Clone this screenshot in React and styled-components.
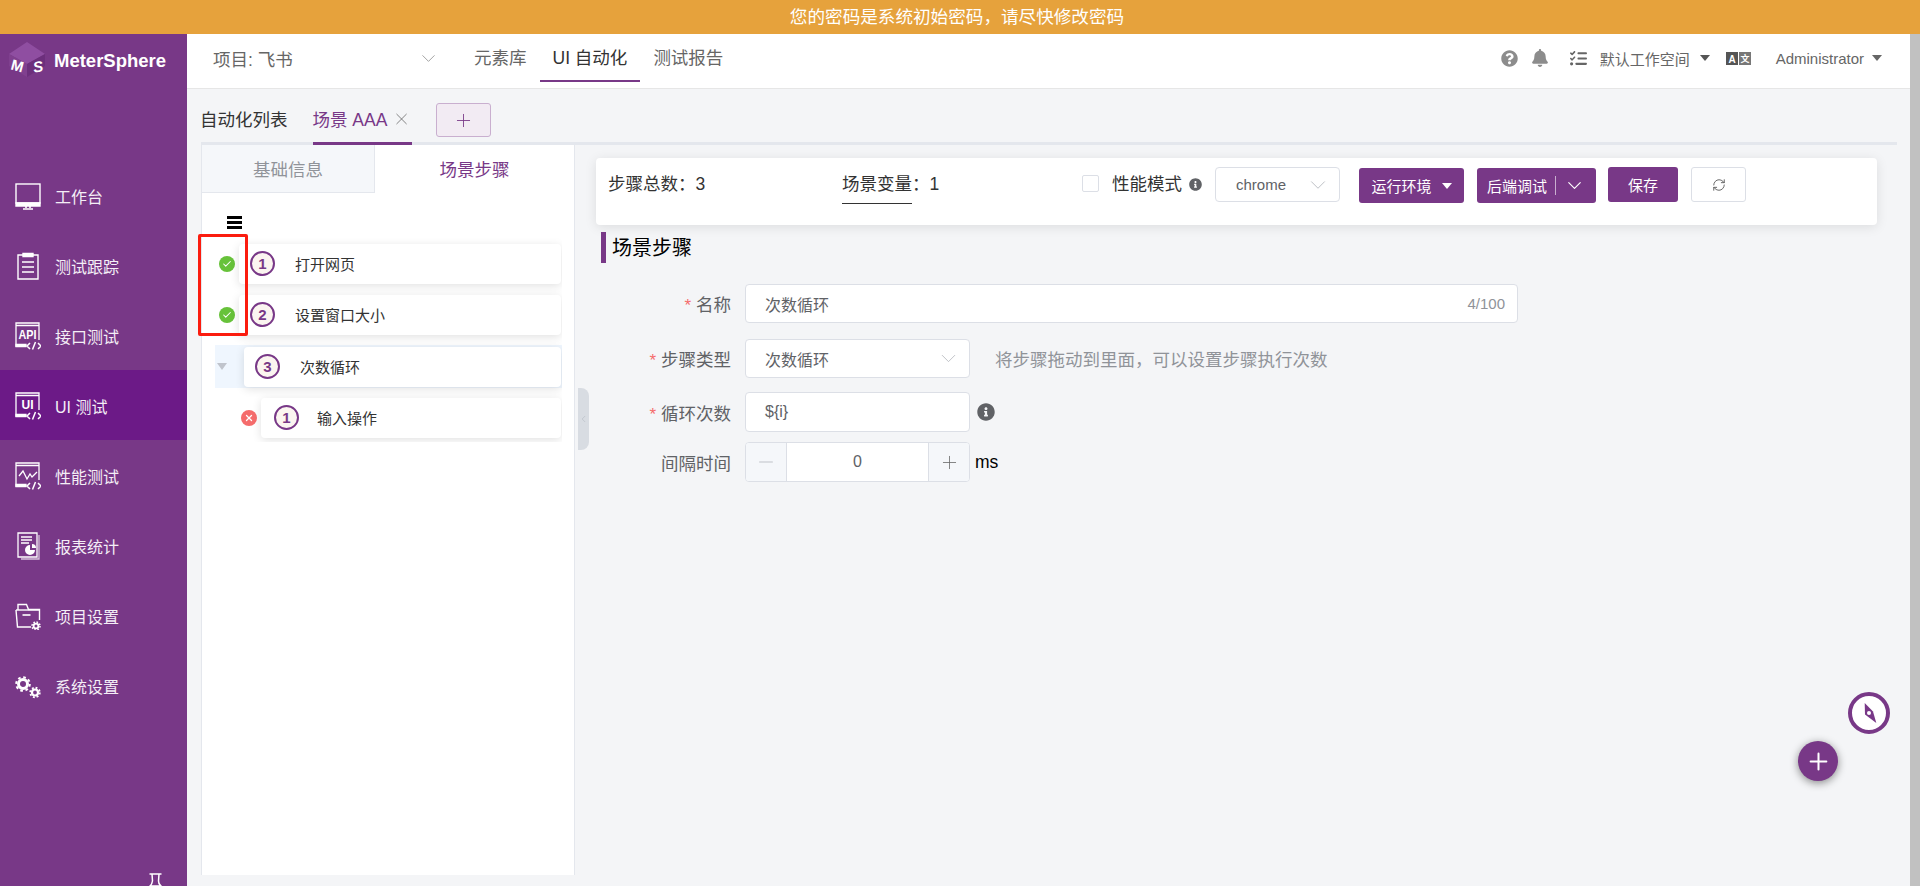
import styled, { createGlobalStyle } from "styled-components"
import { FaBell, FaInfoCircle, FaQuestionCircle } from "react-icons/fa"
import { FaListCheck } from "react-icons/fa6"
import { ChevronDown, ChevronLeft, Minus, Plus, RefreshCw, X, Check } from "lucide-react"

const purple = "#783887"

const Global = createGlobalStyle`
  html, body, #root { margin: 0; height: 100%; }
  body {
    overflow: hidden;
    font-family: "Liberation Sans", "Noto Sans CJK SC", sans-serif;
    color: #333;
  }
  * { box-sizing: border-box; }
`

function MonitorIcon() {
  return (
    <svg width="26" height="28" viewBox="0 0 26 28" fill="none" stroke="#fff" strokeWidth="1.4">
      <rect x="1" y="2" width="24" height="19" />
      <path d="M1 21h24v3H1z" fill="#fff" />
      <path d="M11 24v2M15 24v2M8 27h10" strokeWidth="1.6" />
    </svg>
  )
}

function ClipboardIcon() {
  return (
    <svg width="26" height="28" viewBox="0 0 26 28" fill="none" stroke="#fff" strokeWidth="1.4">
      <path d="M8 3H3v24h20V3h-5" />
      <path d="M8 1.500h10v3H8z" fill="#fff" />
      <path d="M7 10h12M7 15h12M7 20h12" />
    </svg>
  )
}

function TestIcon({ label, wave }) {
  return (
    <svg width="26" height="28" viewBox="0 0 26 28" fill="none" stroke="#fff" strokeWidth="1.3">
      <path d="M11 24H1V1h23v17M1 3.500h23" />
      <path d="M1 22.500h10v2H1z" fill="#fff" />
      {wave && <path d="M4 14l4-5 4 8 3-5 2 3 5-5" />}
      {label && (
        <text
          x="12.500"
          y="17"
          textAnchor="middle"
          fill="#fff"
          stroke="none"
          fontSize={label.length > 2 ? 12 : 13}
          fontWeight="700"
          textLength={label.length > 2 ? 18 : 12}
          lengthAdjust="spacingAndGlyphs"
        >
          {label}
        </text>
      )}
      <path d="M15 21l-3 3 3 3M23 21l3 3-3 3M20.500 20l-3 7.500" strokeWidth="1.5" />
    </svg>
  )
}

function ReportIcon() {
  return (
    <svg width="26" height="28" viewBox="0 0 26 28" fill="none" stroke="#fff" strokeWidth="1.3">
      <path d="M3 1h19v24H3z" />
      <path d="M24 3v24H6" opacity=".7" />
      <path d="M6 5h11M6 8h11M6 11h8" strokeWidth="1.5" />
      <path d="M15 13a5 5 0 1 0 5 5h-5z" fill="#fff" stroke="none" />
      <path d="M17 12a4 4 0 0 1 4 4h-4z" fill="#fff" stroke="none" />
    </svg>
  )
}

function FolderIcon() {
  return (
    <svg width="26" height="28" viewBox="0 0 26 28" fill="none" stroke="#fff" strokeWidth="1.4">
      <path d="M3 8V2.500h8.500l2 5h11V18" />
      <path d="M1 8h23.500" />
      <path d="M1 8l1.500 17H16" />
      <path d="M7.500 13h8" strokeWidth="1.6" />
      <circle cx="21" cy="24" r="2.400" strokeWidth="1.800" />
      <circle cx="21" cy="24" r="4" strokeWidth="1.500" strokeDasharray="1.600 1.540" />
    </svg>
  )
}

function GearsIcon() {
  return (
    <svg width="26" height="28" viewBox="0 0 26 28" fill="none" stroke="#fff">
      <circle cx="8" cy="12" r="4.500" strokeWidth="3" />
      <circle cx="8" cy="12" r="6.800" strokeWidth="2" strokeDasharray="2.700 2.640" />
      <circle cx="20" cy="20.500" r="3" strokeWidth="2.200" />
      <circle cx="20" cy="20.500" r="4.800" strokeWidth="1.800" strokeDasharray="1.900 1.870" />
    </svg>
  )
}

function PinIcon() {
  return (
    <svg width="13" height="24" viewBox="0 0 13 24" fill="none" stroke="#fff" strokeWidth="1.5">
      <path d="M0.500 1h12M3 1l0.500 7Q3 11 1 13h11Q9.500 11 9.500 8L10 1" />
    </svg>
  )
}

function LogoCube() {
  return (
    <svg width="36" height="35" viewBox="0 0 36 35">
      <path d="M18 0l18 12-18 10L0 12z" fill="#8f4ea1" />
      <path d="M0 12l18 10v13L0 24z" fill="#80408f" />
      <path d="M36 12L18 22v13l18-11z" fill="#6c2f7c" />
      <text x="2" y="29" fontSize="15" fontWeight="700" fill="#fff" transform="rotate(15 8 24)">M</text>
      <text x="24" y="30" fontSize="15" fontWeight="700" fontStyle="italic" fill="#fff" transform="rotate(-10 29 25)">S</text>
    </svg>
  )
}

function LangIcon() {
  return (
    <svg width="25" height="13" viewBox="0 0 25 13">
      <rect width="12" height="13" fill="#555" />
      <rect x="13" width="12" height="13" fill="#777" />
      <text x="6" y="10.500" textAnchor="middle" fontSize="10" fontWeight="700" fill="#fff">A</text>
      <text x="19" y="10" textAnchor="middle" fontSize="9" fontWeight="700" fill="#fff">文</text>
    </svg>
  )
}

function CompassIcon() {
  return (
    <svg width="42" height="42" viewBox="0 0 42 42">
      <circle cx="21" cy="21" r="19" fill="#fff" stroke={purple} strokeWidth="4" />
      <path d="M16.700 11L25 19.500 28.300 31 17 22.500z" fill={purple} />
      <circle cx="21" cy="21" r="2" fill="#fff" />
    </svg>
  )
}

const menus = [
  { name: "工作台", icon: <MonitorIcon /> },
  { name: "测试跟踪", icon: <ClipboardIcon /> },
  { name: "接口测试", icon: <TestIcon label="API" /> },
  { name: "UI 测试", icon: <TestIcon label="UI" />, active: true },
  { name: "性能测试", icon: <TestIcon wave /> },
  { name: "报表统计", icon: <ReportIcon /> },
  { name: "项目设置", icon: <FolderIcon /> },
  { name: "系统设置", icon: <GearsIcon /> },
]

const steps = [
  { no: 1, name: "打开网页", status: "ok", indent: 17 },
  { no: 2, name: "设置窗口大小", status: "ok", indent: 17 },
  { no: 3, name: "次数循环", status: "open", indent: 13 },
  { no: 1, name: "输入操作", status: "error", indent: 39 },
]

export default function App() {
  return (
    <Page>
      <Global />
      <Banner>您的密码是系统初始密码，请尽快修改密码</Banner>
      <Body>
        <Sidebar>
          <LogoRow>
            <LogoCube />
            <LogoText>MeterSphere</LogoText>
          </LogoRow>
          {menus.map((m) => (
            <MenuItem key={m.name} $active={m.active}>
              {m.icon}
              <span>{m.name}</span>
            </MenuItem>
          ))}
          <PinRow>
            <PinIcon />
          </PinRow>
        </Sidebar>

        <Content>
          <Header>
            <ProjectSelect>
              <span>项目: 飞书</span>
              <ChevronDown size={23} strokeWidth={0.8} color="#888" />
            </ProjectSelect>
            <NavItem>元素库</NavItem>
            <NavItem $active>UI 自动化</NavItem>
            <NavItem>测试报告</NavItem>
            <HeaderRight>
              <HeaderIcon><FaQuestionCircle size={17} color="#8c8c8c" /></HeaderIcon>
              <HeaderIcon $ml={13}><FaBell size={18} color="#8c8c8c" /></HeaderIcon>
              <HeaderIcon $ml={21}><FaListCheck size={17} color="#666" /></HeaderIcon>
              <HeaderText $ml={13}>默认工作空间</HeaderText>
              <Caret $ml={10} $color="#555" />
              <HeaderIcon $ml={16}><LangIcon /></HeaderIcon>
              <HeaderText $ml={25}>Administrator</HeaderText>
              <Caret $ml={8} $color="#666" />
            </HeaderRight>
          </Header>

          <Workspace>
            <TabBar>
              <TopTab $shift={-1} $mr={25}>自动化列表</TopTab>
              <TopTab $active $mr={24}>
                场景 AAA
                <X size={20} strokeWidth={0.9} color="#555" />
              </TopTab>
              <AddTab><Plus size={21} strokeWidth={1} color={purple} /></AddTab>
            </TabBar>

            <Columns>
              <LeftPanel>
                <PanelTabs>
                  <PanelTab>基础信息</PanelTab>
                  <PanelTab $active>场景步骤</PanelTab>
                </PanelTabs>
                <Hamburger />
                <Tree>
                  {steps.map((s, i) => {
                    const failed = s.status === "error"
                    return (
                      <TreeRow key={i} $indent={s.indent} $open={s.status === "open"}>
                        {s.status === "open" ? <TreeArrow /> : (
                          <StatusDot $error={failed}>
                            {failed
                              ? <X size={10} strokeWidth={3} color="#fff" />
                              : <Check size={10} strokeWidth={2.5} color="#fff" />}
                          </StatusDot>
                        )}
                        <StepCard $pad={failed ? 13 : 11}>
                          <StepNo $gap={failed ? 18 : 20}>{s.no}</StepNo>
                          <StepName>{s.name}</StepName>
                        </StepCard>
                      </TreeRow>
                    )
                  })}
                </Tree>
                <Highlight />
                <CollapseHandle><ChevronLeft size={20} strokeWidth={1} color="#aab0b9" /></CollapseHandle>
              </LeftPanel>

              <MainColumn>
                <TopCard>
                  <Stat $w={234}>步骤总数：3</Stat>
                  <Stat $w={240}><Underlined>场景变量</Underlined>：1</Stat>
                  <CheckBox />
                  <Stat $w={70}>性能模式</Stat>
                  <InfoWrap $ml={7} $top={11}><FaInfoCircle size={13} color="#606266" /></InfoWrap>
                  <BrowserSelect>
                    <span>chrome</span>
                    <ChevronDown size={26} strokeWidth={0.8} color="#b4b7bd" />
                  </BrowserSelect>
                  <PrimaryButton $w={105} $ml={19} $top={1}>
                    运行环境
                    <Caret $ml={10} $color="#fff" />
                  </PrimaryButton>
                  <PrimaryButton $w={119} $ml={13} $top={1}>
                    后端调试
                    <ButtonDivider />
                    <ChevronDown size={23} strokeWidth={1.2} color="#fff" />
                  </PrimaryButton>
                  <PrimaryButton $w={70} $ml={12}>保存</PrimaryButton>
                  <RefreshButton><RefreshCw size={14} strokeWidth={1.5} color="#555" /></RefreshButton>
                </TopCard>

                <SectionTitle>场景步骤</SectionTitle>

                <Form>
                  <FormRow $mb={16}>
                    <Label $required>名称</Label>
                    <Field $wide>
                      <span>次数循环</span>
                      <Counter>4/100</Counter>
                    </Field>
                  </FormRow>
                  <FormRow $mb={14}>
                    <Label $required>步骤类型</Label>
                    <Field>
                      <span>次数循环</span>
                      <ChevronDown size={25} strokeWidth={0.8} color="#b4b7bd" />
                    </Field>
                    <Hint>将步骤拖动到里面，可以设置步骤执行次数</Hint>
                  </FormRow>
                  <FormRow $mb={10} $h={40}>
                    <Label $required>循环次数</Label>
                    <Field>
                      <span>{"${i}"}</span>
                    </Field>
                    <InfoWrap $ml={7}><FaInfoCircle size={18} color="#606266" /></InfoWrap>
                  </FormRow>
                  <FormRow $h={40}>
                    <Label>间隔时间</Label>
                    <NumberBox>
                      <NumberSide $left><Minus size={22} strokeWidth={0.9} color="#b4b7bd" /></NumberSide>
                      <NumberValue>0</NumberValue>
                      <NumberSide><Plus size={21} strokeWidth={0.9} color="#666" /></NumberSide>
                    </NumberBox>
                    <Unit>ms</Unit>
                  </FormRow>
                </Form>
              </MainColumn>
            </Columns>

            <CompassButton><CompassIcon /></CompassButton>
            <Fab><Plus size={27} strokeWidth={1.8} color="#fff" /></Fab>
          </Workspace>
        </Content>

        <ScrollTrack />
      </Body>
    </Page>
  )
}

const Page = styled.div`
  display: flex;
  flex-direction: column;
  height: 100vh;
  width: 100vw;
  overflow: hidden;
`
const Banner = styled.div`
  flex: 0 0 34px;
  background: #e6a23c;
  color: #fff;
  font-size: 17.600px;
  line-height: 34px;
  text-align: center;
  padding-right: 6px;
`
const Body = styled.div`
  flex: 1;
  display: flex;
  min-height: 0;
`
const Sidebar = styled.aside`
  flex: 0 0 187px;
  display: flex;
  flex-direction: column;
  background: ${purple};
  color: #fff;
`
const LogoRow = styled.div`
  flex: 0 0 126px;
  display: flex;
  align-items: flex-start;
  gap: 9px;
  padding: 8px 0 0 9px;
`
const LogoText = styled.div`
  font-size: 18.500px;
  font-weight: 700;
  line-height: 35px;
  margin-top: 1px;
`
const MenuItem = styled.div`
  flex: 0 0 70px;
  display: flex;
  align-items: center;
  gap: 14px;
  padding: 2px 0 0 15px;
  font-size: 16px;
  color: #f4eef6;
  background: ${(props) => (props.$active ? "#6c1a87" : "transparent")};
`
const PinRow = styled.div`
  margin-top: auto;
  height: 13px;
  overflow: hidden;
  display: flex;
  justify-content: flex-end;
  padding-right: 25px;
`
const Content = styled.div`
  flex: 1;
  min-width: 0;
  display: flex;
  flex-direction: column;
  background: #f4f5f7;
`
const Header = styled.header`
  flex: 0 0 55px;
  display: flex;
  align-items: flex-start;
  background: #fff;
  border-bottom: 1px solid #e6e6e6;
`
const ProjectSelect = styled.div`
  width: 274px;
  height: 48px;
  padding: 0 21px 0 26px;
  display: flex;
  align-items: center;
  justify-content: space-between;
  font-size: 17.500px;
  color: #666;
`
const NavItem = styled.div`
  height: 48px;
  line-height: 48px;
  padding: 0 13px;
  font-size: 17.500px;
  color: ${(props) => (props.$active ? "#333" : "#666")};
  border-bottom: 2px solid ${(props) => (props.$active ? purple : "transparent")};
`
const HeaderRight = styled.div`
  margin-left: auto;
  height: 48px;
  display: flex;
  align-items: center;
  padding-right: 28px;
`
const HeaderIcon = styled.span`
  display: inline-flex;
  margin-left: ${(props) => props.$ml || 0}px;
`
const HeaderText = styled.span`
  margin-left: ${(props) => props.$ml}px;
  font-size: 15px;
  color: #666;
`
const Caret = styled.i`
  display: inline-block;
  width: 0;
  height: 0;
  margin-left: ${(props) => props.$ml}px;
  border-left: 5px solid transparent;
  border-right: 5px solid transparent;
  border-top: 6px solid ${(props) => props.$color};
`
const Workspace = styled.main`
  position: relative;
  flex: 1;
  min-height: 0;
  display: flex;
  flex-direction: column;
  padding: 0 0 11px 14px;
`
const TabBar = styled.div`
  flex: 0 0 56px;
  display: flex;
  align-items: flex-end;
  margin-right: 13px;
  border-bottom: 3px solid #e4e7ed;
`
const TopTab = styled.div`
  height: 56px;
  margin-bottom: -3px;
  margin-left: ${(props) => props.$shift || 0}px;
  margin-right: ${(props) => props.$mr}px;
  padding-top: 17px;
  display: flex;
  align-items: flex-start;
  gap: 5px;
  width: ${(props) => (props.$active ? "99px" : "auto")};
  line-height: 28px;
  font-size: 17.500px;
  white-space: nowrap;
  color: ${(props) => (props.$active ? purple : "#333")};
  border-bottom: 3px solid ${(props) => (props.$active ? purple : "transparent")};
  svg { margin-top: 3px; }
`
const AddTab = styled.div`
  width: 55px;
  height: 34px;
  align-self: flex-start;
  margin-top: 14px;
  display: flex;
  align-items: center;
  justify-content: center;
  background: #f2ebf3;
  border: 1px solid #c9afcf;
  border-radius: 3px;
`
const Columns = styled.div`
  flex: 1;
  min-height: 0;
  display: flex;
`
const LeftPanel = styled.section`
  position: relative;
  flex: 0 0 374px;
  background: #fff;
  border: 1px solid #e4e7ed;
  border-width: 0 1px;
`
const PanelTabs = styled.div`
  display: flex;
  height: 48px;
  border-bottom: 1px solid #e4e7ed;
`
const PanelTab = styled.div`
  flex: ${(props) => (props.$active ? "1" : "0 0 173px")};
  height: ${(props) => (props.$active ? "48px" : "47px")};
  line-height: 50px;
  text-align: center;
  font-size: 17.500px;
  color: ${(props) => (props.$active ? purple : "#909399")};
  background: ${(props) => (props.$active ? "#fff" : "#f5f7fa")};
  border-right: ${(props) => (props.$active ? "none" : "1px solid #e4e7ed")};
`
const Hamburger = styled.div`
  width: 15px;
  height: 13px;
  margin: 23px 0 8px 25px;
  border-top: 3px solid #000;
  border-bottom: 3px solid #000;
  position: relative;
  &::after {
    content: "";
    position: absolute;
    left: 0;
    right: 0;
    top: 2px;
    height: 3px;
    background: #000;
  }
`
const Tree = styled.div`
  width: 360px;
  overflow: hidden;
  display: flex;
  flex-direction: column;
  gap: 8.330px;
  padding: 5px 0 3px;
`
const TreeRow = styled.div`
  height: 43px;
  display: flex;
  align-items: center;
  padding: 2px 1px 1px 0;
  margin-left: ${(props) => props.$indent}px;
  background: ${(props) => (props.$open ? "#eff6fe" : "transparent")};
`
const StatusDot = styled.span`
  flex: 0 0 16px;
  height: 16px;
  margin-right: 4px;
  border-radius: 50%;
  display: flex;
  align-items: center;
  justify-content: center;
  background: ${(props) => (props.$error ? "#f56c6c" : "#67c23a")};
`
const TreeArrow = styled.i`
  margin: 0 17px 0 2px;
  border-left: 5px solid transparent;
  border-right: 5px solid transparent;
  border-top: 7px solid #c0c4cc;
`
const StepCard = styled.div`
  flex: 1;
  height: 40px;
  display: flex;
  align-items: center;
  padding: 0 0 1px ${(props) => props.$pad}px;
  background: #fff;
  border-radius: 4px;
  box-shadow: 0 2px 10px rgba(0, 0, 0, 0.12);
`
const StepNo = styled.span`
  flex: 0 0 25px;
  height: 25px;
  margin-right: ${(props) => props.$gap}px;
  border: 2px solid ${purple};
  border-radius: 50%;
  background: #fbf5f0;
  color: ${purple};
  font-size: 15px;
  font-weight: 700;
  line-height: 21px;
  text-align: center;
`
const StepName = styled.span`
  font-size: 15px;
  color: #333;
`
const Highlight = styled.div`
  position: absolute;
  left: -4px;
  top: 89px;
  width: 50px;
  height: 102px;
  border: 3px solid #fb1c0f;
  border-radius: 2px;
`
const CollapseHandle = styled.div`
  position: absolute;
  left: 376px;
  top: 243px;
  width: 11px;
  height: 62px;
  display: flex;
  align-items: center;
  justify-content: center;
  background: #d8dce2;
  border-radius: 0 8px 8px 0;
`
const MainColumn = styled.div`
  margin-left: 21px;
  width: 1281px;
`
const TopCard = styled.div`
  height: 67px;
  margin-top: 13px;
  padding: 9px 0 0 12px;
  display: flex;
  align-items: flex-start;
  background: #fff;
  border-radius: 4px;
  box-shadow: 0 2px 12px rgba(0, 0, 0, 0.1);
`
const Stat = styled.div`
  width: ${(props) => props.$w}px;
  font-size: 17.500px;
  line-height: 34px;
  white-space: nowrap;
`
const Underlined = styled.span`
  display: inline-block;
  padding-bottom: 2px;
  border-bottom: 1px solid #333;
`
const CheckBox = styled.span`
  width: 17px;
  height: 17px;
  margin: 8px 13px 0 0;
  background: #fff;
  border: 1px solid #dcdfe6;
  border-radius: 2px;
`
const InfoWrap = styled.span`
  display: inline-flex;
  margin-top: ${(props) => props.$top || 0}px;
  margin-left: ${(props) => props.$ml}px;
`
const BrowserSelect = styled.div`
  width: 125px;
  height: 35px;
  margin-left: 13px;
  padding: 0 8px 0 20px;
  display: flex;
  align-items: center;
  justify-content: space-between;
  background: #fff;
  border: 1px solid #dcdfe6;
  border-radius: 4px;
  font-size: 15px;
  color: #606266;
`
const PrimaryButton = styled.div`
  width: ${(props) => props.$w}px;
  height: 35px;
  margin: ${(props) => props.$top || 0}px 0 0 ${(props) => props.$ml}px;
  display: flex;
  align-items: center;
  justify-content: center;
  background: ${purple};
  border-radius: 3px;
  color: #fff;
  font-size: 15px;
`
const ButtonDivider = styled.i`
  width: 1px;
  height: 19px;
  margin: 0 7px 0 8px;
  background: #c9afcf;
`
const RefreshButton = styled.div`
  width: 55px;
  height: 35px;
  margin-left: 13px;
  display: flex;
  align-items: center;
  justify-content: center;
  background: #fff;
  border: 1px solid #dcdfe6;
  border-radius: 3px;
`
const SectionTitle = styled.h3`
  margin: 7px 0 0 5px;
  height: 31px;
  padding-left: 6px;
  border-left: 5px solid ${purple};
  font-size: 20px;
  font-weight: 400;
  line-height: 33px;
  color: #000;
`
const Form = styled.div`
  margin-top: 21px;
`
const FormRow = styled.div`
  height: ${(props) => props.$h || 39}px;
  margin-bottom: ${(props) => props.$mb || 0}px;
  display: flex;
  align-items: center;
`
const Label = styled.label`
  width: 135px;
  margin-right: 14px;
  text-align: right;
  font-size: 17.500px;
  color: #606266;
  &::before {
    content: ${(props) => (props.$required ? '"*"' : '""')};
    color: #f56c6c;
    font-size: 17px;
    margin-right: 5px;
  }
`
const Field = styled.div`
  width: ${(props) => (props.$wide ? "773px" : "225px")};
  height: 100%;
  padding: 0 8px 0 19px;
  display: flex;
  align-items: center;
  justify-content: space-between;
  background: #fff;
  border: 1px solid #dcdfe6;
  border-radius: 4px;
  font-size: 16px;
  color: #606266;
`
const Counter = styled.span`
  margin-right: 4px;
  font-size: 15px;
  color: #909399;
`
const Hint = styled.span`
  margin-left: 25px;
  font-size: 17.500px;
  color: #909399;
`
const NumberBox = styled.div`
  width: 225px;
  height: 100%;
  display: flex;
  background: #fff;
  border: 1px solid #dcdfe6;
  border-radius: 4px;
  overflow: hidden;
`
const NumberSide = styled.span`
  flex: 0 0 41px;
  display: flex;
  align-items: center;
  justify-content: center;
  background: #f5f7fa;
  border-${(props) => (props.$left ? "right" : "left")}: 1px solid #dcdfe6;
`
const NumberValue = styled.span`
  flex: 1;
  line-height: 38px;
  text-align: center;
  font-size: 16px;
  color: #606266;
`
const Unit = styled.span`
  margin-left: 5px;
  font-size: 17.500px;
  color: #000;
`
const ScrollTrack = styled.div`
  flex: 0 0 10px;
  background: #c1c1c1;
`
const CompassButton = styled.div`
  position: absolute;
  left: 1661px;
  top: 603px;
  width: 42px;
  height: 42px;
`
const Fab = styled.div`
  position: absolute;
  left: 1611px;
  top: 652px;
  width: 40px;
  height: 40px;
  display: flex;
  align-items: center;
  justify-content: center;
  background: ${purple};
  border-radius: 50%;
  box-shadow: 0 2px 8px rgba(0, 0, 0, 0.45);
`
